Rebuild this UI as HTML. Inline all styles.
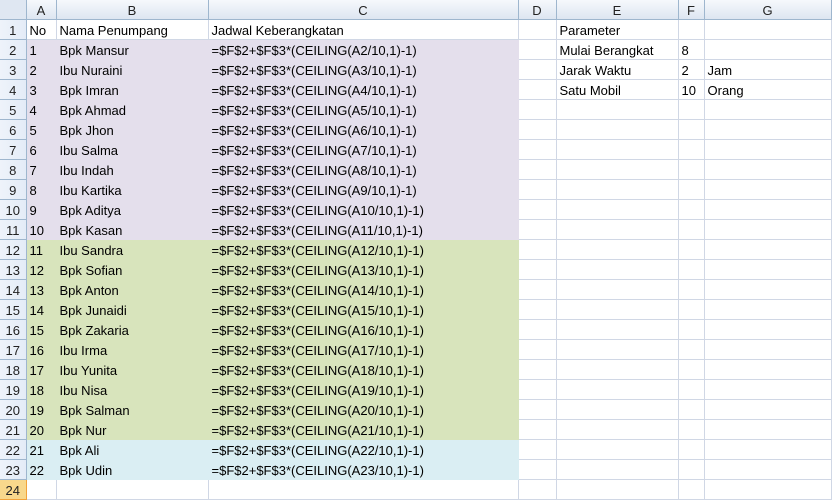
<!DOCTYPE html><html><head><style>
body{margin:0;width:833px;height:500px;overflow:hidden;background:#fff;font-family:"Liberation Sans",sans-serif;font-size:13px;color:#000}
table{border-collapse:collapse;table-layout:fixed;width:831px}
td{height:17px;padding:2px 0 0 3px;border-right:1px solid #d0d7e5;border-bottom:1px solid #d0d7e5;white-space:nowrap;overflow:hidden;line-height:17px}
tr.h td{height:18px;padding-top:1px;background:linear-gradient(#f6f9fc,#dde6f1);text-align:center;padding-left:0;border-color:#9eb6ce;color:#222}
td.r{background:linear-gradient(90deg,#eef3fa,#e4ecf7);text-align:center;padding-left:0;border-color:#9eb6ce;color:#222}
td.sel{background:#f8d88c;border-color:#f2a33b}
.p td.v{background:#e4dfec;border-color:#e4dfec}.g td.v{background:#d8e4bc;border-color:#d8e4bc}.b td.v{background:#daeef3;border-color:#daeef3}
</style></head><body>
<table>
<colgroup><col style="width:26px"><col style="width:30px"><col style="width:152px"><col style="width:310px"><col style="width:38px"><col style="width:122px"><col style="width:26px"><col style="width:127px"></colgroup>
<tr class="h"><td style="background:#dfe7f2"></td><td>A</td><td>B</td><td>C</td><td>D</td><td>E</td><td>F</td><td>G</td></tr>
<tr><td class="r">1</td><td>No</td><td>Nama Penumpang</td><td>Jadwal Keberangkatan</td><td></td><td>Parameter</td><td></td><td></td></tr>
<tr class="p"><td class="r">2</td><td class="v">1</td><td class="v">Bpk Mansur</td><td class="v">=$F$2+$F$3*(CEILING(A2/10,1)-1)</td><td></td><td>Mulai Berangkat</td><td>8</td><td></td></tr>
<tr class="p"><td class="r">3</td><td class="v">2</td><td class="v">Ibu Nuraini</td><td class="v">=$F$2+$F$3*(CEILING(A3/10,1)-1)</td><td></td><td>Jarak Waktu</td><td>2</td><td>Jam</td></tr>
<tr class="p"><td class="r">4</td><td class="v">3</td><td class="v">Bpk Imran</td><td class="v">=$F$2+$F$3*(CEILING(A4/10,1)-1)</td><td></td><td>Satu Mobil</td><td>10</td><td>Orang</td></tr>
<tr class="p"><td class="r">5</td><td class="v">4</td><td class="v">Bpk Ahmad</td><td class="v">=$F$2+$F$3*(CEILING(A5/10,1)-1)</td><td></td><td></td><td></td><td></td></tr>
<tr class="p"><td class="r">6</td><td class="v">5</td><td class="v">Bpk Jhon</td><td class="v">=$F$2+$F$3*(CEILING(A6/10,1)-1)</td><td></td><td></td><td></td><td></td></tr>
<tr class="p"><td class="r">7</td><td class="v">6</td><td class="v">Ibu Salma</td><td class="v">=$F$2+$F$3*(CEILING(A7/10,1)-1)</td><td></td><td></td><td></td><td></td></tr>
<tr class="p"><td class="r">8</td><td class="v">7</td><td class="v">Ibu Indah</td><td class="v">=$F$2+$F$3*(CEILING(A8/10,1)-1)</td><td></td><td></td><td></td><td></td></tr>
<tr class="p"><td class="r">9</td><td class="v">8</td><td class="v">Ibu Kartika</td><td class="v">=$F$2+$F$3*(CEILING(A9/10,1)-1)</td><td></td><td></td><td></td><td></td></tr>
<tr class="p"><td class="r">10</td><td class="v">9</td><td class="v">Bpk Aditya</td><td class="v">=$F$2+$F$3*(CEILING(A10/10,1)-1)</td><td></td><td></td><td></td><td></td></tr>
<tr class="p"><td class="r">11</td><td class="v">10</td><td class="v">Bpk Kasan</td><td class="v">=$F$2+$F$3*(CEILING(A11/10,1)-1)</td><td></td><td></td><td></td><td></td></tr>
<tr class="g"><td class="r">12</td><td class="v">11</td><td class="v">Ibu Sandra</td><td class="v">=$F$2+$F$3*(CEILING(A12/10,1)-1)</td><td></td><td></td><td></td><td></td></tr>
<tr class="g"><td class="r">13</td><td class="v">12</td><td class="v">Bpk Sofian</td><td class="v">=$F$2+$F$3*(CEILING(A13/10,1)-1)</td><td></td><td></td><td></td><td></td></tr>
<tr class="g"><td class="r">14</td><td class="v">13</td><td class="v">Bpk Anton</td><td class="v">=$F$2+$F$3*(CEILING(A14/10,1)-1)</td><td></td><td></td><td></td><td></td></tr>
<tr class="g"><td class="r">15</td><td class="v">14</td><td class="v">Bpk Junaidi</td><td class="v">=$F$2+$F$3*(CEILING(A15/10,1)-1)</td><td></td><td></td><td></td><td></td></tr>
<tr class="g"><td class="r">16</td><td class="v">15</td><td class="v">Bpk Zakaria</td><td class="v">=$F$2+$F$3*(CEILING(A16/10,1)-1)</td><td></td><td></td><td></td><td></td></tr>
<tr class="g"><td class="r">17</td><td class="v">16</td><td class="v">Ibu Irma</td><td class="v">=$F$2+$F$3*(CEILING(A17/10,1)-1)</td><td></td><td></td><td></td><td></td></tr>
<tr class="g"><td class="r">18</td><td class="v">17</td><td class="v">Ibu Yunita</td><td class="v">=$F$2+$F$3*(CEILING(A18/10,1)-1)</td><td></td><td></td><td></td><td></td></tr>
<tr class="g"><td class="r">19</td><td class="v">18</td><td class="v">Ibu Nisa</td><td class="v">=$F$2+$F$3*(CEILING(A19/10,1)-1)</td><td></td><td></td><td></td><td></td></tr>
<tr class="g"><td class="r">20</td><td class="v">19</td><td class="v">Bpk Salman</td><td class="v">=$F$2+$F$3*(CEILING(A20/10,1)-1)</td><td></td><td></td><td></td><td></td></tr>
<tr class="g"><td class="r">21</td><td class="v">20</td><td class="v">Bpk Nur</td><td class="v">=$F$2+$F$3*(CEILING(A21/10,1)-1)</td><td></td><td></td><td></td><td></td></tr>
<tr class="b"><td class="r">22</td><td class="v">21</td><td class="v">Bpk Ali</td><td class="v">=$F$2+$F$3*(CEILING(A22/10,1)-1)</td><td></td><td></td><td></td><td></td></tr>
<tr class="b"><td class="r">23</td><td class="v">22</td><td class="v">Bpk Udin</td><td class="v">=$F$2+$F$3*(CEILING(A23/10,1)-1)</td><td></td><td></td><td></td><td></td></tr>
<tr><td class="r sel">24</td><td></td><td></td><td></td><td></td><td></td><td></td><td></td></tr>
</table>
</body></html>
